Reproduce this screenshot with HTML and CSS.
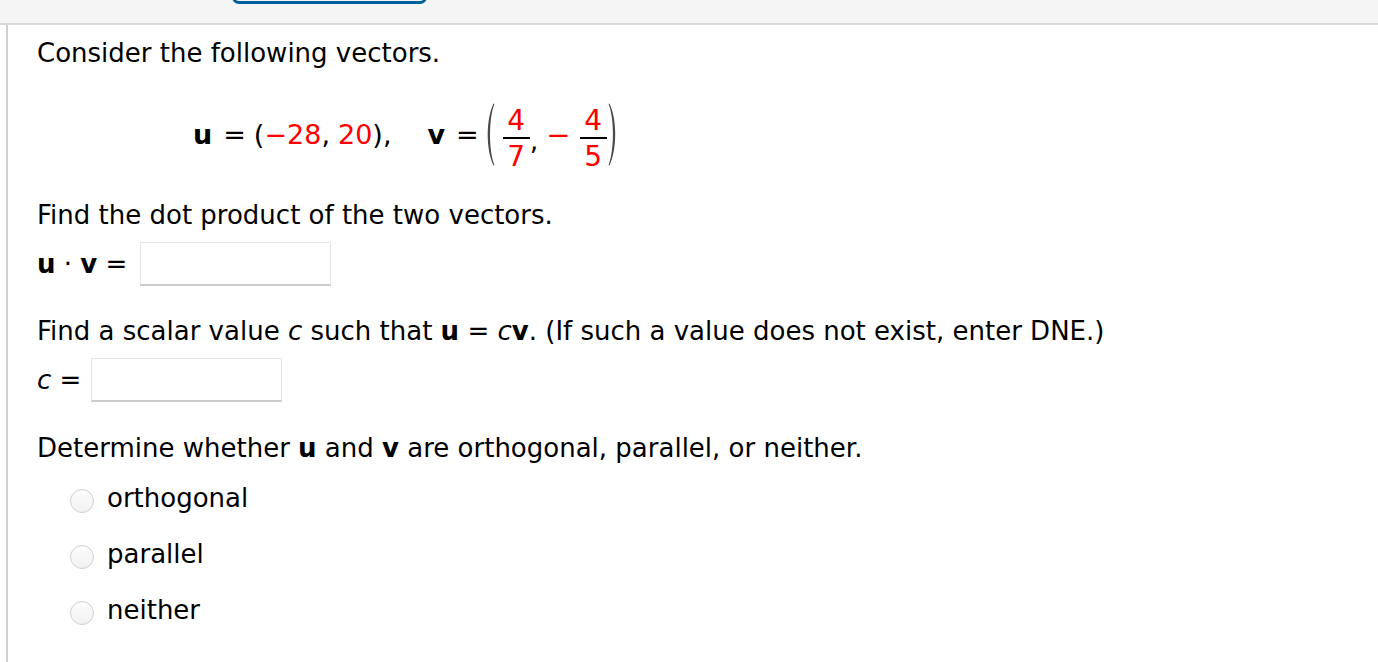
FILE: index.html
```html
<!DOCTYPE html>
<html>
<head>
<meta charset="utf-8">
<link rel="stylesheet" href="styles.css">
</head>
<body>
<div class="topbar"><div class="tab"></div></div>
<div class="content">
  <p class="line first">Consider the following vectors.</p>
  <div class="vectors">
    <span class="b">u</span><span class="eq">=</span><span>(</span><span class="red">−28</span><span>,</span><span class="red sp">20</span><span>)</span><span>,</span>
    <span class="b vv">v</span><span class="eq eq2">=</span>
    <svg class="bigparen" width="10" height="63" viewBox="0 0 10 63"><path d="M8.6 0.5 C0.8 16 0.8 47 8.6 62.5 L9.4 62 C3.6 47 3.6 16 9.4 1 Z" fill="#4a4a4a"/></svg>
    <span class="frac f1"><span class="num red">4</span><span class="bar"></span><span class="den red">7</span></span><span class="comma">,</span>
    <span class="red minus">−</span>
    <span class="frac f2"><span class="num red">4</span><span class="bar"></span><span class="den red">5</span></span>
    <svg class="bigparen" width="10" height="63" viewBox="0 0 10 63"><path d="M1.4 0.5 C9.2 16 9.2 47 1.4 62.5 L0.6 62 C6.4 47 6.4 16 0.6 1 Z" fill="#4a4a4a"/></svg>
  </div>
  <p class="line dot">Find the dot product of the two vectors.</p>
  <div class="answer a1">
    <span class="lbl"><b>u</b> · <b>v</b> =</span><span class="box"></span>
  </div>
  <p class="line scalar">Find a scalar value <i>c</i> such that <b>u</b> = <i>c</i><b>v</b>. (If such a value does not exist, enter DNE.)</p>
  <div class="answer a2">
    <span class="lbl"><i>c</i> =</span><span class="box"></span>
  </div>
  <p class="line det">Determine whether <b>u</b> and <b>v</b> are orthogonal, parallel, or neither.</p>
  <ul class="opts">
    <li><span class="radio"></span><span>orthogonal</span></li>
    <li><span class="radio"></span><span>parallel</span></li>
    <li><span class="radio"></span><span>neither</span></li>
  </ul>
</div>
</body>
</html>
```

FILE: styles.css
```css
html, body {
  margin: 0;
  padding: 0;
  background: #fff;
}
body {
  font-family: "DejaVu Sans", Verdana, sans-serif;
  font-size: 26px;
  color: #000;
  width: 1378px;
  height: 662px;
  overflow: hidden;
}
.topbar {
  height: 23px;
  background: #f5f5f5;
  border-bottom: 2px solid #d9d9d9;
  position: relative;
}
.tab {
  position: absolute;
  left: 232px;
  top: -13px;
  width: 189px;
  height: 11px;
  border: 3px solid #00609c;
  border-radius: 7px;
}
.content {
  margin-left: 6px;
  border-left: 2px solid #d0d0d0;
  padding: 13px 0 0 29px;
  height: 640px;
}
.line {
  margin: 0;
  line-height: 30px;
}
.vectors {
  display: flex;
  align-items: center;
  font-size: 27px;
  margin: 35px 0 0 156px;
  height: 63px;
}
.b { font-weight: bold; }
.red { color: #f00; }
.eq { margin: 0 8px 0 11px; }
.eq2 { margin: 0 6px 0 11px; }
.sp { margin-left: 8px; }
.vv { margin-left: 36px; }
.bigparen { display: block; }
.frac {
  display: inline-flex;
  flex-direction: column;
  align-items: center;
  font-size: 28px;
  line-height: 26px;
  margin-top: 8px;
}
.f1 { margin-left: 8px; }
.f2 { margin-right: 1px; }
.frac .bar {
  width: 27px;
  height: 2px;
  background: #000;
  margin: 3px 0 5px;
}
.comma { margin-top: 12px; }
.minus { margin: 0 9px 0 8px; font-size: 29px; }
.dot { margin-top: 34px; }
.answer {
  display: flex;
  align-items: center;
}
.a1 { margin-top: 12px; }
.a2 { margin-top: 12px; }
.answer .lbl { margin-right: 13px; }
.a2 .lbl { margin-right: 10px; }
.box {
  border: 1px solid #e4e4e4;
  border-bottom: 2px solid #cbcbcb;
  background: #fff;
  box-sizing: border-box;
  width: 191px;
  height: 44px;
}
.scalar { margin-top: 30px; }
.det { margin-top: 31px; }
.opts {
  list-style: none;
  margin: 7px 0 0 0;
  padding: 0 0 0 33px;
}
.opts li {
  display: flex;
  align-items: center;
  height: 56px;
}
.radio {
  width: 24px;
  height: 24px;
  border-radius: 50%;
  border: 1px solid #cfcfcf;
  box-sizing: border-box;
  background: linear-gradient(#fdfdfd, #f1f1f1);
  margin-right: 13px;
  margin-top: 5px;
}
```
